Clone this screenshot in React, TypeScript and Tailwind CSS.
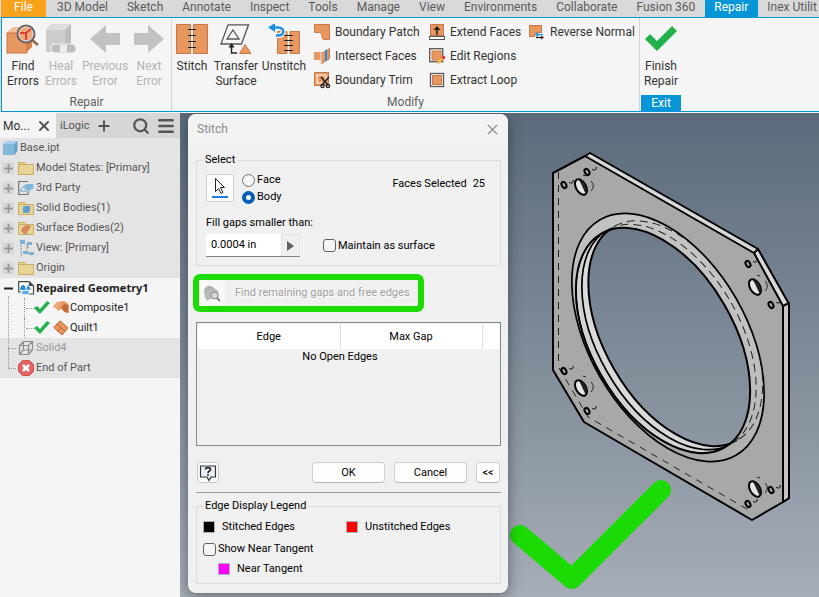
import { Menu, Plus, Search, X } from "lucide-react"
import type { ReactNode } from "react"

const ORANGE = "#e8975f"
const ORANGE_DARK = "#c8794a"

/* ---------- Ribbon icons ---------- */

const FindErrorsIcon = () => (
    <svg width="34" height="32" viewBox="0 0 34 32">
        <path d="M1 9 7 3h20l-1 20-6 6H1z" fill="#dc8448" />
        <path d="M1 9 7 3h20l-6 6z" fill="#f3bd95" />
        <rect x="1" y="9" width="20" height="20" fill={ORANGE} stroke={ORANGE_DARK} />
        <path d="m26 16 6 5" stroke="#8a6a45" strokeWidth="2.500" />
        <circle cx="20" cy="10" r="8.500" fill="#eea87a" stroke="#666" strokeWidth="2" />
        <circle cx="20" cy="10" r="7" fill="none" stroke="#ddd" />
        <path d="M14 9h6l5-4M20 9v7" stroke="#d92020" strokeWidth="1.500" fill="none" />
    </svg>
)

const HealErrorsIcon = () => (
    <svg width="34" height="32" viewBox="0 0 34 32">
        <path d="m2 6 5-6h20v20l-6 8H2z" fill="#bcbcbc" />
        <path d="m2 6 5-6h20l-6 6z" fill="#dedede" />
        <rect x="2" y="6" width="19" height="22" fill="#cdcdcd" />
        <rect x="7" y="20" width="25" height="9" rx="4" fill="#bdbdbd" stroke="#f5f5f5" />
        <rect x="16" y="21" width="7" height="7" fill="#eee" />
    </svg>
)

const ArrowIcon = ({ flip = false }: { flip?: boolean }) => (
    <svg width="30" height="32" viewBox="0 0 30 32" className={flip ? "-scale-x-100" : ""}>
        <path d="M0 15 16 1v8h14v12H16v8z" fill="#c2c2c2" />
    </svg>
)

const StitchIcon = () => (
    <svg width="32" height="32" viewBox="0 0 32 32">
        <path d="M.5.5h14v29H.5zM17.500.5h14v29h-14z" fill={ORANGE} stroke={ORANGE_DARK} />
        <path d="M12 5.500h8M12 11.500h8M12 17.500h8M12 23.500h8" stroke="#222" strokeWidth="1.200" />
    </svg>
)

const TransferIcon = () => (
    <svg width="32" height="32" viewBox="0 0 32 32">
        <path d="M8 .8h20.500L21.500 20H1z" fill="none" stroke="#555" strokeWidth="1.300" />
        <path d="m13 6 6 9H7z" fill="none" stroke="#555" strokeWidth="1.300" />
        <path d="M11.500 22v7H17" fill="none" stroke="#222" strokeWidth="1.400" />
        <path d="m11.500 19 3 4.500h-6z" fill="#222" />
        <path d="m25 20.500 6 9H19.500z" fill={ORANGE} stroke={ORANGE_DARK} />
    </svg>
)

const UnstitchIcon = () => (
    <svg width="34" height="32" viewBox="0 0 34 32">
        <path d="M10.500 7.500H20v22h-9.500zM23 7.500h9.500v22H23z" fill={ORANGE} stroke={ORANGE_DARK} />
        <path d="M17 11.500h9M17 16.500h9M17 21.500h9M17 26.500h9" stroke="#222" strokeWidth="1.200" />
        <path d="M6 3.500h5c7 0 7 8 0 8H9" fill="none" stroke="#f5f5f5" strokeWidth="5" />
        <path d="M6 3.500h5c7 0 7 8 0 8H9" fill="none" stroke="#1a8fe8" strokeWidth="2.500" />
        <path d="M1 3.500 8-1v9z" fill="#1a8fe8" />
    </svg>
)

const FinishIcon = () => (
    <svg width="32" height="32" viewBox="0 0 32 32">
        <path d="m0 15 5-5 7 7L27 2l5 5-20 20z" fill="#22b14c" />
    </svg>
)

const PatchIcon = () => (
    <svg width="17" height="17" viewBox="0 0 17 17">
        <path d="M.5.5h15v15h-6c-2 0-1-7-4-7h-5z" fill={ORANGE} stroke={ORANGE_DARK} />
    </svg>
)

const IntersectIcon = () => (
    <svg width="17" height="17" viewBox="0 0 17 17">
        <path d="M0 4h15v8H0z" fill={ORANGE} />
        <path d="M7 6 15.500.5v10L7 16z" fill={ORANGE} stroke={ORANGE_DARK} />
        <path d="M7 4.500V16" stroke="#f5f5f5" />
        <path d="M12 2v11" stroke="#1a8fe8" strokeWidth="2" />
    </svg>
)

const TrimIcon = () => (
    <svg width="17" height="17" viewBox="0 0 17 17">
        <rect x=".5" y=".5" width="14" height="13" fill={ORANGE} stroke={ORANGE_DARK} />
        <rect x="3" y="3" width="9" height="8" fill={ORANGE} stroke="#fff" />
        <path d="m7 5 7 8M15 5l-7 8" stroke="#222" strokeWidth="1.500" />
        <circle cx="8.500" cy="14" r="1.600" fill="none" stroke="#222" strokeWidth="1.300" />
        <circle cx="14" cy="14" r="1.600" fill="none" stroke="#222" strokeWidth="1.300" />
    </svg>
)

const ExtendIcon = () => (
    <svg width="17" height="17" viewBox="0 0 17 17">
        <rect x="1.500" y=".5" width="13" height="11" fill={ORANGE} stroke={ORANGE_DARK} />
        <rect x=".5" y="12.500" width="15" height="3" fill="#fff" stroke="#555" />
        <path d="M8 5v6" stroke="#222" strokeWidth="1.500" />
        <path d="m8 2 3.500 4h-7z" fill="#222" />
    </svg>
)

const EditRegionsIcon = () => (
    <svg width="17" height="17" viewBox="0 0 17 17">
        <rect x=".7" y=".7" width="13" height="13" fill="#fff" stroke="#555" strokeWidth="1.300" />
        <rect x="3" y="3" width="9" height="9" fill={ORANGE} stroke={ORANGE_DARK} />
        <path d="m8 16 1-4 4-3 2 2-4 4z" fill="#f6b73c" />
        <circle cx="14.500" cy="9.500" r="1.800" fill="#e33" />
    </svg>
)

const ExtractIcon = () => (
    <svg width="17" height="17" viewBox="0 0 17 17">
        <rect x="1.500" y="1.500" width="13" height="13" fill="#fff" stroke="#555" strokeWidth="1.300" />
        <rect x="3.500" y="3.500" width="9" height="9" fill={ORANGE} stroke={ORANGE_DARK} />
    </svg>
)

const ReverseIcon = () => (
    <svg width="17" height="17" viewBox="0 0 17 17">
        <path d="M.5 1.500h12v7H6v4H.5z" fill={ORANGE} stroke={ORANGE_DARK} />
        <path d="M7 10.500h7" stroke="#1a8fe8" strokeWidth="1.300" />
        <path d="m6 10.500 3-2.500v5z" fill="#1a8fe8" />
        <path d="M7 13.500h6" stroke="#222" strokeWidth="1.300" />
        <path d="m15 13.500-3-2v4z" fill="#222" />
    </svg>
)

/* ---------- Browser tree icons ---------- */

const CubeIcon = () => (
    <svg width="15" height="16" viewBox="0 0 15 16">
        <path d="m0 4 4-3h10.500v10l-3 4H0z" fill="#659fc9" />
        <path d="m0 4 4-3h10.500l-3 3z" fill="#a8cfea" />
        <path d="M0 4h11.500v11H0z" fill="#83b7dc" />
    </svg>
)

const FolderIcon = ({ children }: { children?: ReactNode }) => (
    <svg width="16" height="16" viewBox="0 0 16 16">
        <path d="M.5 14.500v-12h6l1.500 2h7.500v10z" fill="#e8d496" stroke="#c8ad62" />
        <path d="M1 4.500h7" stroke="#c8ad62" />
        {children}
    </svg>
)

const ImportIcon = () => (
    <svg width="16" height="16" viewBox="0 0 16 16">
        <path d="M10 1.500H.7v13H10M10 12v3" fill="none" stroke="#777" strokeWidth="1.200" />
        <path d="M8 4h7.500v5H8z" fill="#83b7dc" />
        <path d="m7 5-5 6h9l1.500-2H7z" fill="#f5f5f5" stroke="#5b9bc9" />
    </svg>
)

const ViewIcon = () => (
    <svg width="16" height="16" viewBox="0 0 16 16">
        <path d="M5 1H3v14h2M9 4v9h2M9 7h3" fill="none" stroke="#888" strokeDasharray="2 1" />
        <path d="M2 0h5v4H2zM9 2h5v3H9zM5 11h5v3H5zM11 12h5v3h-5z" fill="#7fb0d4" />
    </svg>
)

const RepairedIcon = () => (
    <svg width="17" height="16" viewBox="0 0 17 16">
        <path d="M3 12H.7V1.700H11l4.500 4V14H11" fill="#fff" stroke="#444" strokeWidth="1.200" />
        <path d="M11 1.500V6h4.500z" fill="#444" />
        <path d="M2 10c0-5 3-6 5-4l1 4z" fill="#2f8fd2" />
        <path d="m10 4 3.500 6h-6z" fill="#2f8fd2" stroke="#fff" strokeWidth=".6" />
        <path d="M4 10.500h7v4H4z" fill="#58ace4" stroke="#fff" strokeWidth=".6" />
    </svg>
)

const CheckIcon = () => (
    <svg width="16" height="14" viewBox="0 0 16 14">
        <path d="m0 7 3-2 3 3 7-8 3 2L6 13z" fill="#22b14c" />
    </svg>
)

const CompositeIcon = () => (
    <svg width="16" height="16" viewBox="0 0 16 16">
        <path d="m0 7 4-5 7-1 4.500 3v9l-4-1-3-4-3 3-1-3z" fill={ORANGE} />
        <path d="m8 8 3-4 4.500 1v8l-4-1z" fill="#c56a30" />
        <path d="m0 7 4-5 5 1-4 5-1 3-1-3z" fill="#eda678" />
    </svg>
)

const QuiltIcon = () => (
    <svg width="16" height="16" viewBox="0 0 16 16">
        <path d="M7 .8 15 8l-6 7L.8 7.500z" fill={ORANGE} stroke="#b5652f" />
        <path d="m4 4 8 7.500M8 8l-3.500 3" stroke="#b5652f" fill="none" />
    </svg>
)

const WireCubeIcon = () => (
    <svg width="16" height="16" viewBox="0 0 16 16">
        <path d="M1.500 5.500 5.500 1.500h9v8.500l-4 4.500h-9zM1.500 5.500h9v9M10.500 5.500l4-4M5.500 1.500V10h9M5.500 10l-4 4.500" fill="none" stroke="#8d8d8d" strokeWidth="1.200" />
    </svg>
)

const EndIcon = () => (
    <svg width="16" height="16" viewBox="0 0 16 16">
        <path d="M4.500.5h7l4 4v7l-4 4h-7l-4-4v-7z" fill="#e06666" stroke="#cf5555" />
        <path d="m5 5 6 6M11 5l-6 6" stroke="#fff" strokeWidth="2.500" />
    </svg>
)

/* ---------- Ribbon ---------- */

const tabs = ["3D Model", "Sketch", "Annotate", "Inspect", "Tools", "Manage", "View", "Environments", "Collaborate", "Fusion 360", "Repair", "Inex Utilit"]

const BigButton = ({ icon, label, width, disabled = false }: { icon: ReactNode; label: string; width: string; disabled?: boolean }) => (
    <button disabled={disabled} className={`${width} flex flex-col items-center text-[#333] disabled:text-[#b3b3b3]`}>
        <span className="h-[35px] flex items-start">{icon}</span>
        <span className="leading-[15px]">{label}</span>
    </button>
)

const SmallButton = ({ icon, label }: { icon: ReactNode; label: string }) => (
    <button className="h-6 flex items-center gap-1 whitespace-nowrap text-[#333]">
        {icon}
        {label}
    </button>
)

const Ribbon = () => (
    <header className="shrink-0 bg-[#d9d9d9] font-[Roboto,sans-serif] text-[12px]">
        <nav className="h-[17px] flex whitespace-nowrap pl-px">
            <button className="w-[45px] mr-[2px] shrink-0 bg-[#faa21b] text-white leading-[14px] pb-[3px]">File</button>
            {tabs.map((tab) => (
                <button
                    key={tab}
                    className={`pl-[9px] pr-[10px] shrink-0 leading-[14px] pb-[3px] ${tab === "Repair" ? "bg-[#0696d7] text-white" : "text-[#5a5a5a]"}`}
                >
                    {tab}
                </button>
            ))}
        </nav>

        <div className="ml-px h-[95px] flex border-y border-l border-[#0696d7] bg-[#f5f5f5]">
            {/* Repair */}
            <section className="w-[170px] flex flex-col border-r border-[#d4d4d4] pt-[6px]">
                <div className="flex flex-1 items-start pl-px">
                    <BigButton width="w-10" icon={<FindErrorsIcon />} label="Find Errors" />
                    <BigButton width="w-9" icon={<HealErrorsIcon />} label="Heal Errors" disabled />
                    <BigButton width="w-[52px]" icon={<ArrowIcon />} label="Previous Error" disabled />
                    <BigButton width="w-9" icon={<ArrowIcon flip />} label="Next Error" disabled />
                </div>
                <h2 className="h-[18px] text-center leading-[18px] text-[#5f5f5f]">Repair</h2>
            </section>

            {/* Modify */}
            <section className="w-[468px] flex flex-col border-r border-[#d4d4d4]">
                <div className="flex flex-1 items-start">
                    <div className="flex items-start pt-[6px]">
                        <BigButton width="w-10" icon={<StitchIcon />} label="Stitch" />
                        <BigButton width="w-[48px]" icon={<TransferIcon />} label="Transfer Surface" />
                        <BigButton width="w-[48px]" icon={<UnstitchIcon />} label="Unstitch" />
                    </div>
                    <div className="grid grid-flow-col grid-rows-3 grid-cols-[115px_100px_auto] pl-[6px] pt-[2px]">
                        <SmallButton icon={<PatchIcon />} label="Boundary Patch" />
                        <SmallButton icon={<IntersectIcon />} label="Intersect Faces" />
                        <SmallButton icon={<TrimIcon />} label="Boundary Trim" />
                        <SmallButton icon={<ExtendIcon />} label="Extend Faces" />
                        <SmallButton icon={<EditRegionsIcon />} label="Edit Regions" />
                        <SmallButton icon={<ExtractIcon />} label="Extract Loop" />
                        <SmallButton icon={<ReverseIcon />} label="Reverse Normal" />
                    </div>
                </div>
                <h2 className="h-[18px] text-center leading-[18px] text-[#5f5f5f]">Modify</h2>
            </section>

            {/* Exit */}
            <section className="flex flex-col items-center justify-between px-px pt-[6px]">
                <BigButton width="w-10" icon={<FinishIcon />} label="Finish Repair" />
                <h2 className="w-full h-4 bg-[#0696d7] text-center leading-4 text-white">Exit</h2>
            </section>
        </div>
    </header>
)

/* ---------- Model browser ---------- */

const TreeRow = ({ icon, label, toggle, active = false, tone = "text-[#555]" }: { icon: ReactNode; label: string; toggle?: "+" | "-"; active?: boolean; tone?: string }) => (
    <li className={`h-5 flex items-center pl-[2px] ${active ? "bg-[#f5f5f5]" : "bg-[#e4e4e4]"}`}>
        <span className="w-4 flex items-center">
            {toggle ? (
                <button aria-label={toggle === "+" ? "Expand" : "Collapse"} className={`w-3 h-3 flex items-center justify-center ${toggle === "+" ? "bg-[#d8d8d8] text-[#999]" : "bg-[#f5f5f5] text-[#222]"}`}>
                    <svg width="9" height="9" viewBox="0 0 9 9" stroke="currentColor" strokeWidth="2">
                        <path d={toggle === "+" ? "M0 4.500h9M4.500 0v9" : "M0 4.500h9"} />
                    </svg>
                </button>
            ) : (
                <span className="ml-[6px] w-2 border-t border-dotted border-[#999]" />
            )}
        </span>
        <span className="w-[18px]">{icon}</span>
        <span className={tone}>{label}</span>
    </li>
)

const ChildRow = ({ icon, label }: { icon: ReactNode; label: string }) => (
    <li className="h-5 flex items-center bg-[#f5f5f5] pl-6">
        <span className="h-full w-[2px] border-l border-dotted border-[#999]" />
        <span className="w-2 border-t border-dotted border-[#999]" />
        <CheckIcon />
        <span className="w-5 pl-[3px]">{icon}</span>
        <span className="text-[#222]">{label}</span>
    </li>
)

const Browser = () => (
    <aside className="w-[180px] shrink-0 bg-[#f5f5f5] font-[Roboto,sans-serif] text-[11px] leading-4 whitespace-nowrap">
        <div className="h-[25px] flex items-center bg-[#d6d6d6] text-[#555]">
            <button className="h-full w-14 flex items-center justify-between bg-[#f5f5f5] pl-[3px] pr-1 text-[12px] text-[#333]">
                Mo...
                <X size={16} strokeWidth={3} color="#555" />
            </button>
            <button className="w-[40px] pl-1 text-left">iLogic</button>
            <button aria-label="Add tab">
                <Plus size={16} strokeWidth={3} />
            </button>
            <button aria-label="Search" className="ml-5">
                <Search size={18} strokeWidth={3} />
            </button>
            <button aria-label="Menu" className="ml-[6px]">
                <Menu size={20} strokeWidth={3} />
            </button>
        </div>

        <div className="h-5 flex items-center gap-[2px] bg-[#e4e4e4] pl-[3px] text-[#555]">
            <CubeIcon />
            Base.ipt
        </div>
        <div className="relative">
            <ul>
                <TreeRow toggle="+" icon={<FolderIcon />} label="Model States: [Primary]" />
                <TreeRow toggle="+" icon={<ImportIcon />} label="3rd Party" />
                <TreeRow
                    toggle="+"
                    icon={
                        <FolderIcon>
                            <path d="m5 7 2-1h5v5l-1.500 2H5z" fill="#5b9fd0" />
                        </FolderIcon>
                    }
                    label="Solid Bodies(1)"
                />
                <TreeRow
                    toggle="+"
                    icon={
                        <FolderIcon>
                            <path d="M4 12c-1-4 2-7 8-6 0 4-3 4-4 8z" fill="#d88a66" stroke="#c57350" strokeWidth=".6" />
                        </FolderIcon>
                    }
                    label="Surface Bodies(2)"
                />
                <TreeRow toggle="+" icon={<ViewIcon />} label="View: [Primary]" />
                <TreeRow toggle="+" icon={<FolderIcon />} label="Origin" />
                <TreeRow toggle="-" icon={<RepairedIcon />} label="Repaired Geometry1" active tone="font-['Noto_Sans',sans-serif] font-bold text-[#222]" />
                <ChildRow icon={<CompositeIcon />} label="Composite1" />
                <ChildRow icon={<QuiltIcon />} label="Quilt1" />
                <TreeRow icon={<WireCubeIcon />} label="Solid4" tone="text-[#999]" />
                <TreeRow icon={<EndIcon />} label="End of Part" />
            </ul>
            <div className="absolute left-2 top-[138px] h-[72px] border-l border-dotted border-[#999]" />
        </div>
    </aside>
)

/* ---------- Stitch dialog ---------- */

const BoxedButton = ({ label, width }: { label: string; width: string }) => (
    <button className={`${width} h-[21px] rounded-[4px] border border-[#d0d0d0] border-b-[#b8b8b8] bg-[#fdfdfd] text-center`}>{label}</button>
)

const Swatch = ({ color, label }: { color: string; label: string }) => (
    <span className="flex items-center gap-[7px]">
        <span className={`w-3 h-3 border border-[#b0b0b0] ${color}`} />
        {label}
    </span>
)

const checkbox = "appearance-none w-[13px] h-[13px] rounded-[3px] border border-[#606060] bg-[#f6f6f6]"
const radio = "appearance-none w-[13px] h-[13px] rounded-full border border-[#707070] bg-[#f6f6f6] checked:border-4 checked:border-[#005fb8] checked:bg-white"

const StitchDialog = () => (
    <div role="dialog" aria-label="Stitch" className="absolute left-2 top-px w-[320px] rounded-lg bg-[#f0f0f0] pb-[9px] font-[Roboto,sans-serif] text-[11px] leading-4 text-black shadow-[0_3px_14px_rgba(0,0,0,0.4)]">
        <div className="h-[30px] flex items-center justify-between rounded-t-lg bg-[#f3f3f3] pl-[9px] pr-[7px] text-[12px] text-[#8a8a8a]">
            Stitch
            <button aria-label="Close">
                <X size={17} strokeWidth={1.500} />
            </button>
        </div>

        <div className="pl-2 pr-[7px] pt-2">
            <fieldset className="h-[114px] border border-[#dcdcdc] px-[9px]">
                <legend className="-ml-[3px] px-[2px]">Select</legend>
                <div className="flex items-center pt-[3px]">
                    <button aria-label="Select geometry" className="w-7 h-7 flex flex-col items-center justify-center rounded-[3px] border border-[#d0d0d0] bg-[#fdfdfd]">
                        <svg width="18" height="22" viewBox="0 0 18 22">
                            <path d="M4.500 1.500v13l3-3 2.500 5 2-1-2.500-5h4z" fill="#fff" stroke="#222" />
                            <path d="M1 20h16" stroke="#1a7fe8" strokeWidth="2" />
                        </svg>
                    </button>
                    <div className="ml-2 flex flex-col gap-px pt-px">
                        <label className="flex items-center gap-[2px]">
                            <input type="radio" name="pick" className={radio} />
                            Face
                        </label>
                        <label className="flex items-center gap-[2px]">
                            <input type="radio" name="pick" defaultChecked className={radio} />
                            Body
                        </label>
                    </div>
                    <p className="ml-auto mr-[6px] flex gap-[6px] pb-[8px]">
                        <span>Faces Selected</span>
                        <span>25</span>
                    </p>
                </div>
                <label htmlFor="gap" className="mt-[10px] block">
                    Fill gaps smaller than:
                </label>
                <div className="mt-[3px] flex items-center">
                    <div className="w-[94px] h-[23px] flex border-b border-[#868686] bg-white">
                        <input id="gap" defaultValue="0.0004 in" className="min-w-0 flex-1 pl-[5px]" />
                        <button aria-label="Gap options" className="w-[19px] flex items-center justify-center border border-b-0 border-[#e4e4e4] bg-[#f0f0f0]">
                            <svg width="8" height="10" viewBox="0 0 8 10">
                                <path d="m0 0 7 5-7 5z" fill="#606060" />
                            </svg>
                        </button>
                    </div>
                    <label className="ml-[23px] flex items-center gap-[2px]">
                        <input type="checkbox" className={checkbox} />
                        Maintain as surface
                    </label>
                </div>
            </fieldset>

            <div className="-ml-[3px] mt-2 w-[231px] h-[38px] rounded-[7px] border-[6px] border-[#1cdb05]">
                <button disabled className="h-full w-full flex items-center gap-[10px] text-[#a0a0a0] [text-shadow:1px_1px_0_#fff]">
                    <span className="w-[26px] h-full flex items-center justify-center rounded-[3px] bg-[#f8f8f8]">
                        <svg width="17" height="17" viewBox="0 0 17 17">
                            <path d="M0 5c1-4 5-5 7-4l6 4c2 2 2 5 1 8l-4-1-7 4c-2-3-3-7-3-11z" fill="#b9b9b9" />
                            <path d="M2 6c0-3 5-5 8-2" stroke="#a2a2a2" fill="none" />
                            <circle cx="10.500" cy="10.500" r="3.500" fill="#d8d8d8" stroke="#858585" />
                            <path d="m13 13 3 3" stroke="#858585" strokeWidth="2" />
                        </svg>
                    </span>
                    Find remaining gaps and free edges
                </button>
            </div>

            <div className="mt-[10px] h-[124px] border border-[#828790] p-px">
                <table className="w-full table-fixed border-collapse text-center">
                    <thead>
                        <tr className="h-[25px] bg-white">
                            <th className="border-r border-[#e0e0e0] font-normal">Edge</th>
                            <th className="border-r border-[#e0e0e0] font-normal">Max Gap</th>
                            <th className="w-[17px]" />
                        </tr>
                    </thead>
                    <tbody>
                        <tr>
                            <td colSpan={2}>No Open Edges</td>
                            <td />
                        </tr>
                    </tbody>
                </table>
            </div>

            <div className="mt-4 flex items-center">
                <button aria-label="Help" className="w-[22px] h-[21px] ml-px flex items-center justify-center rounded-[3px] border border-[#c8c8c8] bg-[#fdfdfd]">
                    <svg width="18" height="18" viewBox="0 0 18 18">
                        <path d="M1.500 2h15v11h-4.500L10 16.500 8 13H1.500z" fill="#e9edf4" stroke="#333" strokeWidth="1.200" />
                        <path d="M6.500 5.500c0-2.500 5-2.500 5 0 0 1.500-2.500 1.500-2.500 3.500M9 10v1.800" fill="none" stroke="#222" strokeWidth="1.600" />
                    </svg>
                </button>
                <div className="ml-auto mr-px flex gap-[9px]">
                    <BoxedButton width="w-[73px]" label="OK" />
                    <BoxedButton width="w-[73px]" label="Cancel" />
                    <BoxedButton width="w-6" label="<<" />
                </div>
            </div>

            <hr className="mt-[9px] border-[#a0a0a0]" />

            <fieldset className="mt-[5px] h-[86px] border border-[#dcdcdc] px-[6px]">
                <legend className="px-[2px]">Edge Display Legend</legend>
                <div className="mt-px flex h-6 items-center">
                    <div className="w-[143px]">
                        <Swatch color="bg-black" label="Stitched Edges" />
                    </div>
                    <Swatch color="bg-[#ff0000]" label="Unstitched Edges" />
                </div>
                <label className="flex h-5 items-center gap-[2px]">
                    <input type="checkbox" className={checkbox} />
                    Show Near Tangent
                </label>
                <div className="flex h-5 items-center pl-[15px]">
                    <Swatch color="bg-[#ff00ff]" label="Near Tangent" />
                </div>
            </fieldset>
        </div>
    </div>
)

/* ---------- 3D view ---------- */

const boltHoles = [[581, 187], [755, 287], [581, 388], [755, 489]]
const pinHoles = [[564, 185], [587, 172], [748, 264], [771, 305], [564, 371], [587, 411], [748, 504], [771, 490]]

const Plate = () => (
    <svg width="639" height="484" viewBox="180 113 639 484" className="absolute left-0 top-0">
        <defs>
            <linearGradient id="ring" x1="0" y1="0" x2="1" y2="1">
                <stop offset="0" stopColor="#c8c8c8" />
                <stop offset="0.500" stopColor="#bdbdbd" />
                <stop offset="1" stopColor="#a0a0a0" />
            </linearGradient>
            <clipPath id="outerRim">
                <ellipse cx="668" cy="337.500" rx="136" ry="78.500" transform="rotate(60 668 337.500)" />
            </clipPath>
            <clipPath id="frontRim">
                <ellipse cx="663" cy="340.500" rx="123.500" ry="71" transform="rotate(60 663 340.500)" />
            </clipPath>
            <mask id="opening" maskUnits="userSpaceOnUse" x="180" y="113" width="639" height="484">
                <rect x="180" y="113" width="639" height="484" fill="#fff" />
                <g clipPath="url(#frontRim)">
                    <ellipse cx="675.500" cy="333.500" rx="123.500" ry="71" transform="rotate(60 675.500 333.500)" fill="#000" />
                </g>
            </mask>
        </defs>

        <g mask="url(#opening)">
            <g stroke="#000" strokeWidth="2" strokeLinejoin="round">
                <path d="m585 156 5-3 168 96 31 55v194l-6 4-31-53z" fill="#d8d8d8" />
                <path d="m783 306 6-3v195l-6 4z" fill="#c4c4c4" />
                <path d="m553 173 32-17 169 97 29 53v196l-31 18-168-98-31-52z" fill="#a8a8a8" />
                <path d="m754 253 4-4" />
            </g>
            <path d="M558.500 172v189M559 368l29 49 164 95" fill="none" stroke="#222" strokeDasharray="7 6" />
            <ellipse cx="668" cy="337.500" rx="136" ry="78.500" transform="rotate(60 668 337.500)" fill="url(#ring)" stroke="#000" strokeWidth="1.700" />
            <g clipPath="url(#outerRim)" fill="none" stroke="#222" strokeDasharray="8 5">
                <ellipse cx="669" cy="337" rx="123.500" ry="71" transform="rotate(60 669 337)" />
                <ellipse cx="675.500" cy="333.500" rx="123.500" ry="71" transform="rotate(60 675.500 333.500)" />
            </g>
            <g clipPath="url(#frontRim)" stroke="#000" strokeWidth="1.700">
                <ellipse cx="663" cy="340.500" rx="123.500" ry="71" transform="rotate(60 663 340.500)" fill="#d2d2d2" />
                <ellipse cx="669" cy="337" rx="123.500" ry="71" transform="rotate(60 669 337)" fill="#dadada" />
            </g>
        </g>
        <g fill="none" stroke="#000" strokeWidth="2">
            <ellipse cx="663" cy="340.500" rx="123.500" ry="71" transform="rotate(60 663 340.500)" />
            <g clipPath="url(#frontRim)">
                <ellipse cx="675.500" cy="333.500" rx="123.500" ry="71" transform="rotate(60 675.500 333.500)" />
            </g>
        </g>

        {boltHoles.map(([x, y]) => (
            <g key={`${x}-${y}`} transform={`translate(${x} ${y})`}>
                <ellipse rx="8.500" ry="5" transform="rotate(60)" fill="#e6e6e6" stroke="#000" strokeWidth="2" />
                <path d="M-2-7C3-7 8 2 5 7 3 4 1-2-2-7z" fill="#222" />
                <path d="M2-12l3 1M10-6c3 3 3 7 0 10" fill="none" stroke="#222" />
            </g>
        ))}
        {pinHoles.map(([x, y]) => (
            <g key={`${x}-${y}`} transform={`translate(${x} ${y})`} fill="none" stroke="#000">
                <ellipse rx="3.200" ry="2.200" transform="rotate(60)" strokeWidth="2" fill="#aaa" />
                <path d="M5-3c2 2 5 1 4-2" />
            </g>
        ))}

        <path d="m520 535 52 44 89-89" fill="none" stroke="#1cdb05" strokeWidth="20" strokeLinecap="round" strokeLinejoin="round" />
    </svg>
)

export default function App() {
    return (
        <div className="h-screen flex flex-col overflow-hidden bg-[#f5f5f5]">
            <Ribbon />
            <div className="mt-px flex min-h-0 flex-1">
                <Browser />
                <main className="relative min-w-0 flex-1 overflow-hidden bg-linear-to-b from-[#5b6b7b] to-[#a6adb7]">
                    <Plate />
                    <StitchDialog />
                </main>
            </div>
        </div>
    )
}
